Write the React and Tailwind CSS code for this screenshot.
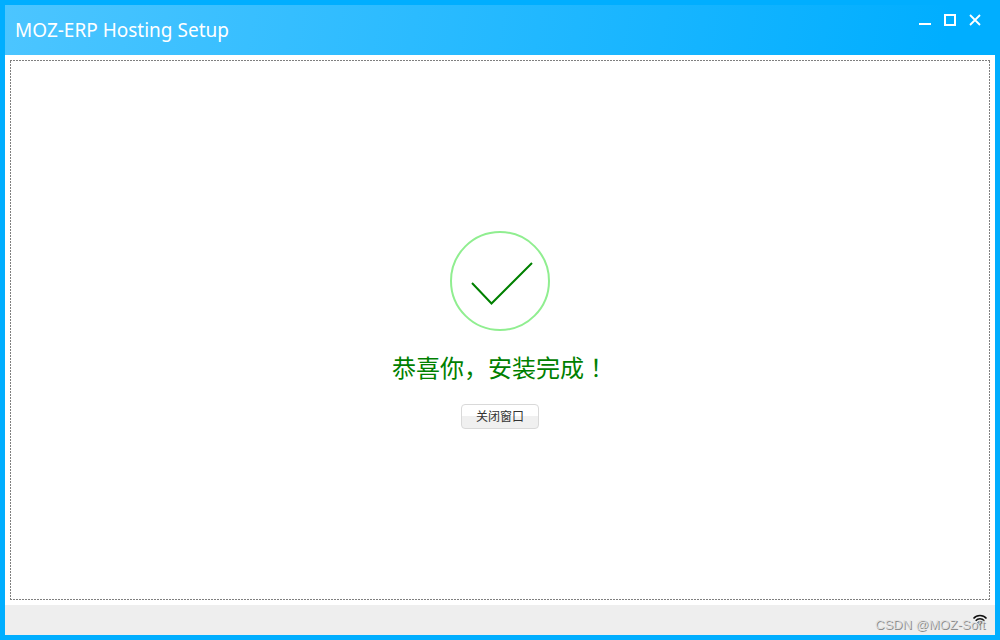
import React from "react";

const MinimizeIcon = () => (
  <svg className="size-3" viewBox="0 0 12 12" aria-hidden="true">
    <path d="M0 10H12" stroke="currentColor" strokeWidth="2" />
  </svg>
);

const MaximizeIcon = () => (
  <svg className="size-3" viewBox="0 0 12 12" fill="none" aria-hidden="true">
    <rect x="1" y="1" width="10" height="10" stroke="currentColor" strokeWidth="2" />
  </svg>
);

const CloseIcon = () => (
  <svg className="size-3" viewBox="0 0 12 12" fill="none" aria-hidden="true">
    <path d="M1 1L11 11M11 1L1 11" stroke="currentColor" strokeWidth="1.8" />
  </svg>
);

const WifiIcon = () => (
  <svg
    className="h-3 w-4"
    viewBox="0 0 16 12"
    fill="none"
    stroke="#111"
    strokeWidth="1.5"
    role="img"
    aria-label="Connected"
  >
    <path d="M1.5 4.4C5 0.6 11 0.6 14.5 4.4" />
    <path d="M3.7 6.8C6 4.2 10 4.2 12.3 6.8" />
    <path d="M5.8 9C7 7.5 9 7.5 10.2 9" />
    <circle cx="8" cy="10.6" r="1.1" fill="#111" stroke="none" />
  </svg>
);

const windowButtons = [
  { label: "Minimize", Icon: MinimizeIcon },
  { label: "Maximize", Icon: MaximizeIcon },
  { label: "Close", Icon: CloseIcon },
];

const TitleBar = () => (
  <header className="flex h-[50px] items-start justify-between bg-linear-[100deg,#4cc5ff,#00aeff_95%] text-white">
    <h1 className="pt-3 pl-[10px] font-['Noto_Sans',sans-serif] text-[19px] leading-[26px]">
      MOZ-ERP Hosting Setup
    </h1>
    <div className="flex pt-[5px] pr-2">
      {windowButtons.map(({ label, Icon }) => (
        <button
          key={label}
          type="button"
          aria-label={label}
          className="flex h-5 w-[25px] items-center justify-center"
        >
          <Icon />
        </button>
      ))}
    </div>
  </header>
);

const SuccessMark = () => (
  <svg className="size-[100px]" viewBox="0 0 100 100" fill="none" aria-hidden="true">
    <circle cx="50" cy="50" r="49" stroke="#90ee90" strokeWidth="2" />
    <path d="M22 52L41.5 72.5L82 32" stroke="#008000" strokeWidth="2" />
  </svg>
);

// 2px dashes with 1px gaps, drawn as the outer layer's background
const DashedPanel = ({ children }) => (
  <div className="flex flex-1 flex-col bg-[repeating-linear-gradient(90deg,#7f7f7f_0_2px,#fff_2px_3px)] py-px">
    <div className="flex flex-1 flex-col bg-[repeating-linear-gradient(180deg,#7f7f7f_0_2px,#fff_2px_3px)] px-px">
      <div className="flex flex-1 flex-col items-center justify-center bg-white">
        {children}
      </div>
    </div>
  </div>
);

const App = () => {
  return (
    <div className="flex min-h-screen flex-col border-[5px] border-[#00aeff] bg-white font-['Liberation_Sans','Noto_Sans_CJK_SC',sans-serif]">
      <TitleBar />
      <main className="flex flex-1 flex-col p-[5px]">
        <DashedPanel>
          <SuccessMark />
          <p className="mt-5 text-2xl text-[#008000]">
            恭喜你，安装完成<span lang="ja" className="font-['Noto_Sans_CJK_JP',sans-serif]">！</span>
          </p>
          <button
            type="button"
            className="mt-[19px] h-[25px] rounded-[4px] border border-[#d9d9d9] bg-linear-to-b from-white from-50% to-[#f0f0f0] to-50% px-[14px] text-xs text-[#333]"
          >
            关闭窗口
          </button>
        </DashedPanel>
      </main>
      <footer className="relative flex h-[30px] items-center justify-end bg-[#eee] pr-[7px]">
        <WifiIcon />
        <span className="absolute right-[10px] bottom-0 text-[13px] leading-5 text-[#e0e0e0]/80 [text-shadow:1px_1px_0_#8c8c8c]">
          CSDN @MOZ-Soft
        </span>
      </footer>
    </div>
  );
};

export default App;
